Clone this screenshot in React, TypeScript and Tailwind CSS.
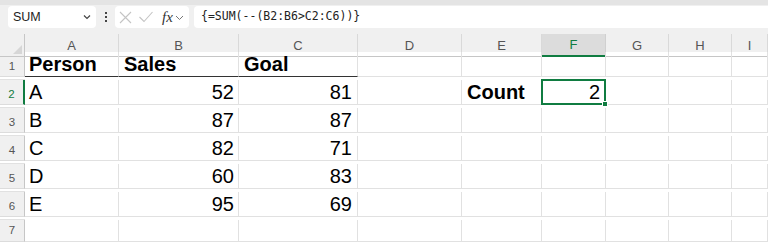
import * as React from "react";

const cols = ["A", "B", "C", "D", "E", "F", "G", "H", "I"];

const data: { a: string; b: string; c: string; e?: string; f?: string }[] = [
    { a: "Person", b: "Sales", c: "Goal" },
    { a: "A", b: "52", c: "81", e: "Count", f: "2" },
    { a: "B", b: "87", c: "87" },
    { a: "C", b: "82", c: "71" },
    { a: "D", b: "60", c: "83" },
    { a: "E", b: "95", c: "69" },
    { a: "", b: "", c: "" },
];

const grid = "grid grid-cols-[25px_94px_120px_119px_104px_80px_64px_63px_63px_1fr]";

export default function App() {
    return (
        <div className="w-[768px] h-[242px] overflow-hidden bg-white font-['Liberation_Sans',Arial,sans-serif]">
            {/* --- FORMULA BAR --- */}
            <div className="h-[34px] bg-[#f0f0f0] border-t-[5px] border-[#e4e4e4] flex items-start pt-[1px] pl-[8px] gap-[3px]">
                <div className="w-[88px] h-[22px] bg-white rounded-[4px] flex items-center justify-between pl-[5px] pr-[4px]">
                    <span className="text-[12.5px] text-[#222]">SUM</span>
                    <svg width="10" height="10" viewBox="0 0 10 10" fill="none" stroke="#444" strokeWidth="1.2">
                        <path d="M2 3.5 L5 6.5 L8 3.5" />
                    </svg>
                </div>
                <div className="w-[13px] h-[22px] flex flex-col items-center justify-center gap-[2px]">
                    <span className="w-[2px] h-[2px] bg-[#444]"></span>
                    <span className="w-[2px] h-[2px] bg-[#444]"></span>
                    <span className="w-[2px] h-[2px] bg-[#444]"></span>
                </div>
                <div className="w-[74px] h-[22px] bg-white rounded-[4px] flex items-center pl-[4px]">
                    <svg width="13" height="13" viewBox="0 0 13 13" fill="none" stroke="#c4c4c4" strokeWidth="1.1">
                        <path d="M1 1 L12 12 M12 1 L1 12" />
                    </svg>
                    <svg width="14" height="12" viewBox="0 0 14 12" fill="none" stroke="#c4c4c4" strokeWidth="1.1" className="ml-[7px]">
                        <path d="M0.5 6 L5 10.5 L13.5 1" />
                    </svg>
                    <span className="ml-[9px] text-[15px] leading-none italic font-['Liberation_Serif',serif] text-[#333]">fx</span>
                    <svg width="9" height="9" viewBox="0 0 9 9" fill="none" stroke="#777" strokeWidth="1" className="ml-[2px]">
                        <path d="M1 3 L4.5 6.5 L8 3" />
                    </svg>
                </div>
                <div className="flex-1 h-[22px] bg-white rounded-l-[4px] flex items-center pl-[7px] ml-[2px]">
                    <span className="text-[11.5px] font-['DejaVu_Sans_Mono',monospace] text-[#222]">{"{=SUM(--(B2:B6>C2:C6))}"}</span>
                </div>
            </div>

            {/* --- COLUMN HEADERS --- */}
            <div className={`${grid} h-[18px] bg-[#f0f0f0]`}>
                <div className="relative border-r border-b border-[#c6c6c6]">
                    <div className="absolute right-[2px] bottom-[2px] w-0 h-0 border-l-[9px] border-l-transparent border-b-[9px] border-b-[#d6d6d6]"></div>
                </div>
                {cols.map((c) =>
                    c === "F" ? (
                        <div key={c} className="bg-[#dcdcdc] border-r border-[#d0d0d0] border-b-2 border-b-[#107c41] flex items-center justify-center pt-[1px] text-[13px] text-[#107c41]">
                            {c}
                        </div>
                    ) : (
                        <div key={c} className="border-r border-[#d9d9d9] border-b border-b-[#c6c6c6] flex items-center justify-center pt-[1px] text-[13px] text-[#555]">
                            {c}
                        </div>
                    )
                )}
            </div>

            {/* --- ROWS --- */}
            {data.map((row, i) => {
                const first = i === 0;
                const active = i === 1;
                const cellBorder = first ? "border-b-[#333]" : "border-b-[#e1e1e1]";
                return (
                    <div key={i} className={`${grid} h-[28px] text-[20px] leading-none text-black`}>
                        <div
                            className={`bg-[#f0f0f0] border-b border-[#dcdcdc] flex items-end justify-center pb-[4px] text-[11.5px] ${
                                active ? "border-r-2 border-r-[#107c41] text-[#107c41]" : "border-r border-r-[#c6c6c6] text-[#555]"
                            }`}
                        >
                            {i + 1}
                        </div>
                        <div className={`border-r border-b border-[#e1e1e1] ${cellBorder} flex items-end pl-[4px] pb-[2px] ${first ? "font-bold" : ""}`}>
                            {row.a}
                        </div>
                        <div className={`border-r border-b border-[#e1e1e1] ${cellBorder} flex items-end pb-[2px] ${first ? "font-bold pl-[5px]" : "justify-end pr-[4px]"}`}>
                            {row.b}
                        </div>
                        <div className={`border-r border-b border-[#e1e1e1] ${cellBorder} flex items-end pb-[2px] ${first ? "font-bold pl-[5px]" : "justify-end pr-[5px]"}`}>
                            {row.c}
                        </div>
                        <div className="border-r border-b border-[#e1e1e1]"></div>
                        <div className="border-r border-b border-[#e1e1e1] flex items-end pl-[5px] pb-[2px] font-bold">
                            {row.e}
                        </div>
                        <div className="relative border-r border-b border-[#e1e1e1] flex items-end justify-end pr-[5px] pb-[2px]">
                            {row.f}
                            {active && (
                                <>
                                    <div className="absolute -left-px -top-px -right-px -bottom-px border-2 border-[#107c41]"></div>
                                    <div className="absolute -right-[3px] -bottom-[3px] w-[6px] h-[6px] bg-[#107c41] border border-white"></div>
                                </>
                            )}
                        </div>
                        <div className="border-r border-b border-[#e1e1e1]"></div>
                        <div className="border-r border-b border-[#e1e1e1]"></div>
                        <div className="border-r border-b border-[#e1e1e1]"></div>
                        <div className="border-b border-[#e1e1e1]"></div>
                    </div>
                );
            })}
        </div>
    );
}
